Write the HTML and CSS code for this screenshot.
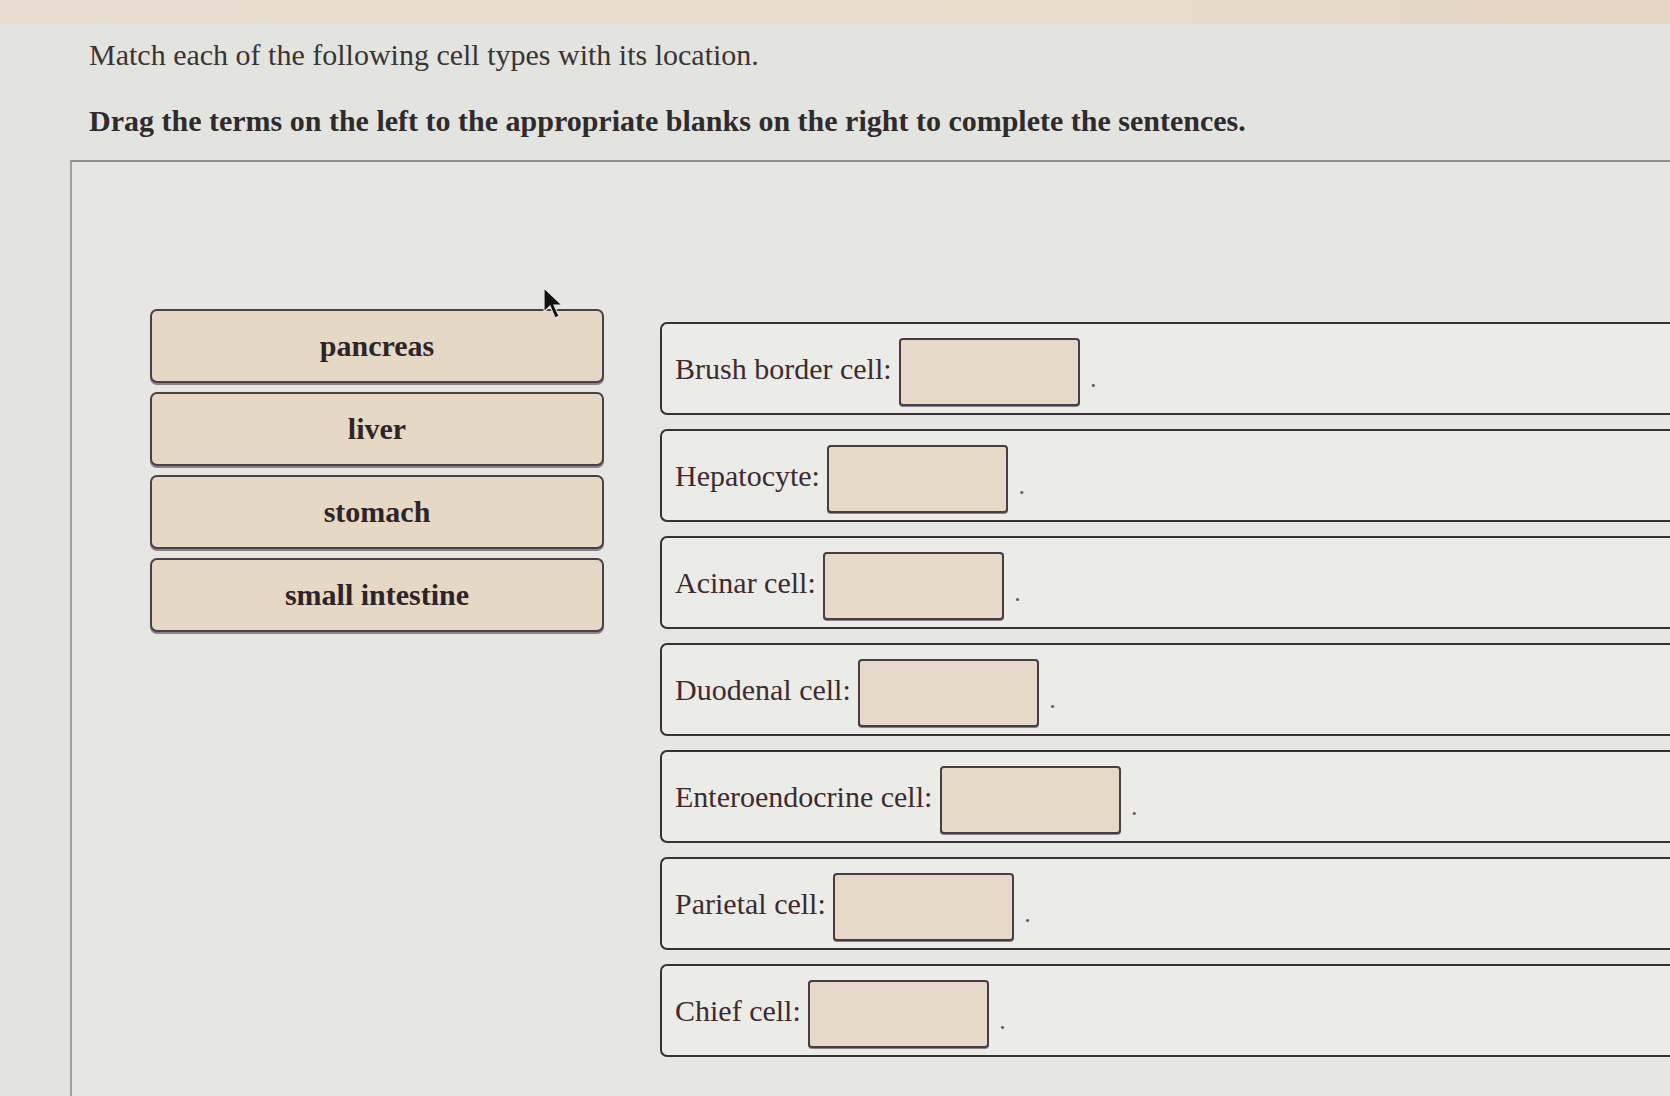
FILE: index.html
```html
<!DOCTYPE html>
<html lang="en">
<head>
    <meta charset="UTF-8">
    <title>Match cell types</title>
    <link rel="stylesheet" href="styles.css">
</head>
<body>
    <div class="top-strip"></div>

    <div class="instructions">
        <p class="prompt">Match each of the following cell types with its location.</p>
        <p class="directions">Drag the terms on the left to the appropriate blanks on the right to complete the sentences.</p>
    </div>

    <div class="activity">
        <div class="term-bank">
            <div class="term">pancreas</div>
            <div class="term">liver</div>
            <div class="term">stomach</div>
            <div class="term">small intestine</div>
        </div>

        <div class="sentences">
            <div class="sentence">Brush border cell: <span class="blank"></span><span class="stop">.</span></div>
            <div class="sentence">Hepatocyte: <span class="blank"></span><span class="stop">.</span></div>
            <div class="sentence">Acinar cell: <span class="blank"></span><span class="stop">.</span></div>
            <div class="sentence">Duodenal cell: <span class="blank"></span><span class="stop">.</span></div>
            <div class="sentence">Enteroendocrine cell: <span class="blank"></span><span class="stop">.</span></div>
            <div class="sentence">Parietal cell: <span class="blank"></span><span class="stop">.</span></div>
            <div class="sentence">Chief cell: <span class="blank"></span><span class="stop">.</span></div>
        </div>

        <!-- mouse pointer resting over the first term -->
        <svg class="pointer" width="24" height="36" viewBox="0 0 24 36">
            <path d="M2 2 L2 26 L8 20 L13 32 L17 30 L12 19 L20 19 Z" fill="#111" stroke="#e6e6e2" stroke-width="1.2"/>
        </svg>
    </div>
</body>
</html>
```

FILE: styles.css
```css
* {
    margin: 0;
    padding: 0;
    box-sizing: border-box;
}

html, body {
    height: 100%;
    overflow: hidden;
}

body {
    font-family: "Liberation Serif", "Times New Roman", serif;
    background: #e3e4df;
    color: #3a3034;
}

.top-strip {
    height: 24px;
    background: linear-gradient(90deg, #e6ddd0 0%, #e8dccb 60%, #e6d6c4 100%);
}

.instructions {
    padding: 12px 0 0 89px;
}

.prompt {
    font-size: 30px;
    line-height: 38px;
    color: #3b3436;
}

.directions {
    font-size: 30px;
    font-weight: bold;
    line-height: 38px;
    margin-top: 28px;
    color: #302a2d;
}

.activity {
    position: relative;
    display: flex;
    margin: 20px 0 0 70px;
    width: calc(100% + 40px);
    height: 1000px;
    background: #e6e7e2;
    border-top: 2px solid #8e8d89;
    border-left: 2px solid #a09f9b;
}

.term-bank {
    width: 454px;
    margin-left: 78px;
    padding-top: 147px;
    display: flex;
    flex-direction: column;
    gap: 9px;
}

.term {
    height: 74px;
    display: flex;
    align-items: center;
    justify-content: center;
    background: #e5d8c5;
    border: 2px solid #4d3f48;
    border-radius: 7px;
    box-shadow: 0 2px 0 #8c8088;
    font-size: 30px;
    font-weight: bold;
    color: #2e2428;
}

.sentences {
    flex: 1;
    margin-left: 56px;
    padding-top: 160px;
    display: flex;
    flex-direction: column;
    gap: 14px;
}

.sentence {
    height: 93px;
    padding: 0 13px;
    display: flex;
    align-items: center;
    background: #ebece8;
    border: 2px solid #3a2f37;
    border-right: none;
    border-radius: 7px 0 0 7px;
    font-size: 30px;
    color: #3e2a30;
    white-space: pre;
}

.blank {
    width: 181px;
    height: 68px;
    margin-top: 6px;
    background: #e6d9c8;
    border: 2px solid #4a3c45;
    border-radius: 4px;
    box-shadow: 0 1px 0 #8c8088;
}

.stop {
    margin: 20px 0 0 10px;
    font-size: 26px;
    color: #5e5458;
}

.pointer {
    position: absolute;
    left: 470px;
    top: 124px;
}
```
